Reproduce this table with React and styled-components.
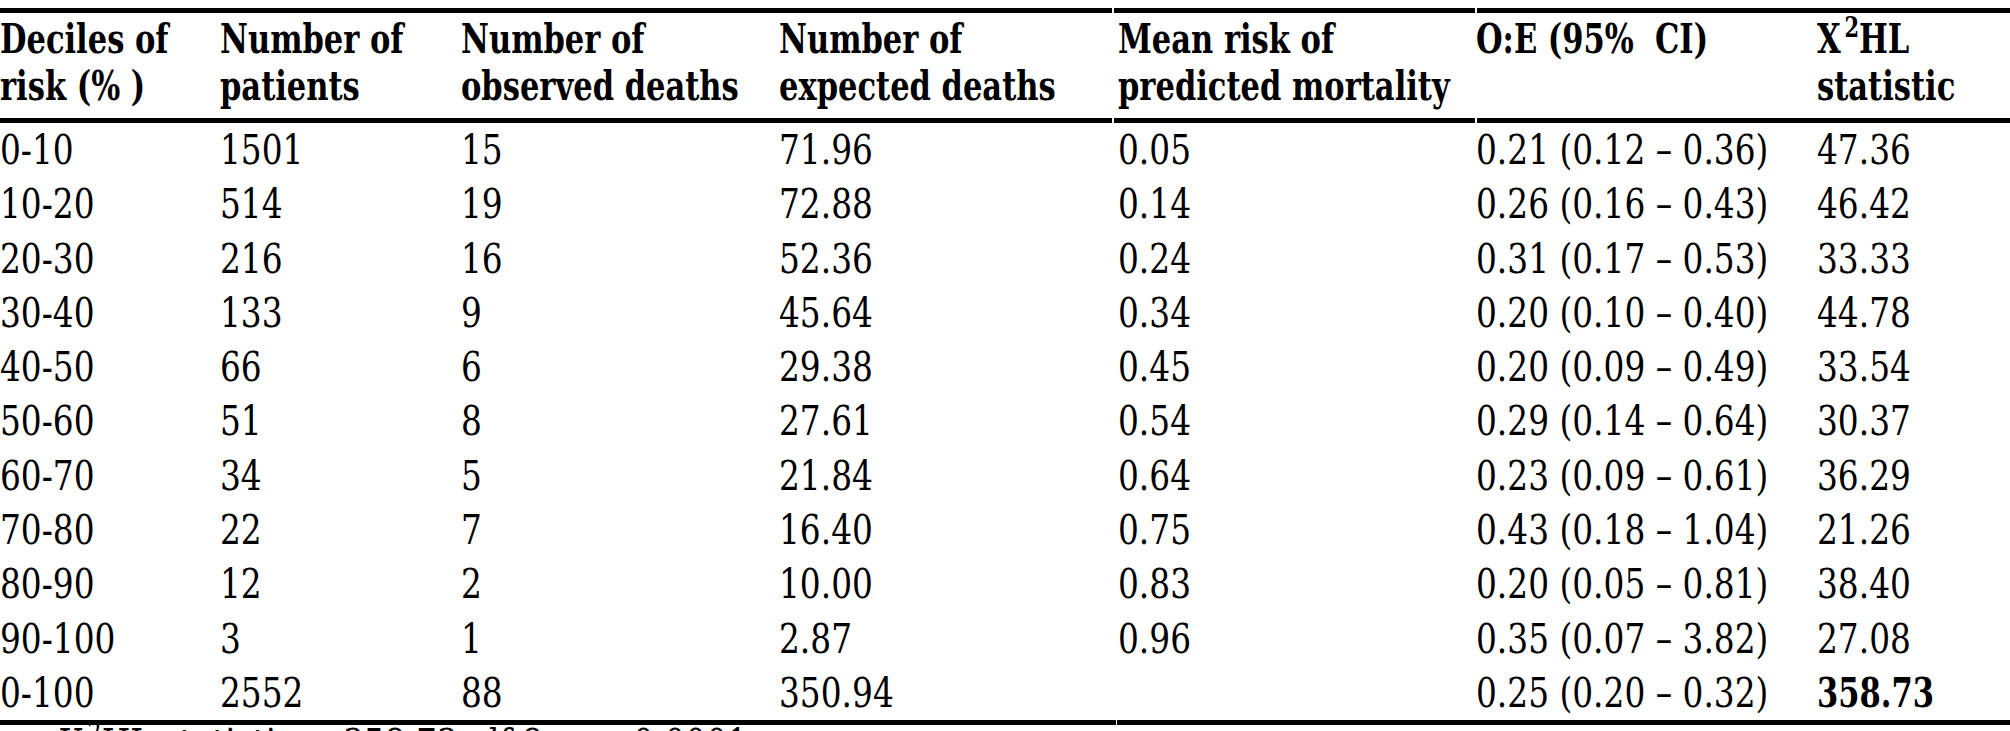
import React from 'react';
import styled, { createGlobalStyle } from 'styled-components';

const GlobalStyle = createGlobalStyle`
  html, body {
    margin: 0;
    padding: 0;
    background: #fff;
  }
  body {
    overflow: hidden;
  }
`;

// column tracks and left padding, measured off the scan
const COLS = '220px 241px 317px 335px 361px 341px 1fr';
const PADS = [0, 0, 0, 1, 5, 2, 2];

const Page = styled.div`
  width: 2010px;
  height: 731px;
  overflow: hidden;
  padding-top: 8px;
  box-sizing: border-box;
  font-family: "DejaVu Serif", "Liberation Serif", serif;
  font-size: 41px;
  color: #000;
`;

const Rule = styled.div`
  display: flex;
  gap: ${props => props.$gap}px;
  height: 5px;
`;

const RuleSeg = styled.div`
  flex: ${props => (props.$width ? `0 0 ${props.$width}px` : '1')};
  background: #000;
`;

const HeaderRow = styled.div`
  display: grid;
  grid-template-columns: ${COLS};
  padding: 3px 0 8px;
  line-height: 47px;
  font-weight: bold;
`;

const DataRow = styled.div`
  display: grid;
  grid-template-columns: ${COLS};
  line-height: 54.3px;
`;

const Cell = styled.div`
  padding-left: ${props => PADS[props.$col]}px;
  display: flex;
  flex-direction: column;
  min-width: 0;
`;

// the scan squeezes the serif face to Times widths, so the glyphs are narrowed
const Txt = styled.span`
  display: block;
  white-space: pre;
  transform: scaleX(${props => (props.$bold ? 0.745 : 0.8)});
  transform-origin: 0 50%;
  font-weight: ${props => (props.$bold ? 'bold' : 'normal')};
`;

const Sup = styled.span`
  font-size: 28px;
  vertical-align: 16px;
  line-height: 0;
  margin-left: 5px;
`;

const Footnote = styled.div`
  padding-left: 60px;
  line-height: 38px;
`;

const headers = [
  ['Deciles of', 'risk (% )'],
  ['Number of', 'patients'],
  ['Number of', 'observed deaths'],
  ['Number of', 'expected deaths'],
  ['Mean risk of', 'predicted mortality'],
  ['O:E (95%\u00a0 CI)', ''],
  [<>X<Sup>2</Sup>HL</>, 'statistic'],
];

const rows = [
  ['0-10', '1501', '15', '71.96', '0.05', '0.21 (0.12 \u2013 0.36)', '47.36'],
  ['10-20', '514', '19', '72.88', '0.14', '0.26 (0.16 \u2013 0.43)', '46.42'],
  ['20-30', '216', '16', '52.36', '0.24', '0.31 (0.17 \u2013 0.53)', '33.33'],
  ['30-40', '133', '9', '45.64', '0.34', '0.20 (0.10 \u2013 0.40)', '44.78'],
  ['40-50', '66', '6', '29.38', '0.45', '0.20 (0.09 \u2013 0.49)', '33.54'],
  ['50-60', '51', '8', '27.61', '0.54', '0.29 (0.14 \u2013 0.64)', '30.37'],
  ['60-70', '34', '5', '21.84', '0.64', '0.23 (0.09 \u2013 0.61)', '36.29'],
  ['70-80', '22', '7', '16.40', '0.75', '0.43 (0.18 \u2013 1.04)', '21.26'],
  ['80-90', '12', '2', '10.00', '0.83', '0.20 (0.05 \u2013 0.81)', '38.40'],
  ['90-100', '3', '1', '2.87', '0.96', '0.35 (0.07 \u2013 3.82)', '27.08'],
  ['0-100', '2552', '88', '350.94', '', '0.25 (0.20 \u2013 0.32)', '358.73'],
];

const App = () => {
  const last = rows.length - 1;
  return (
    <>
      <GlobalStyle />
      <Page>
        <Rule $gap={2}>
          <RuleSeg $width={1112} />
          <RuleSeg $width={361} />
          <RuleSeg />
        </Rule>
        <HeaderRow>
          {headers.map((lines, c) => (
            <Cell key={c} $col={c}>
              <Txt $bold>{lines[0]}</Txt>
              <Txt $bold>{lines[1] || ' '}</Txt>
            </Cell>
          ))}
        </HeaderRow>
        <Rule $gap={2}>
          <RuleSeg $width={1112} />
          <RuleSeg $width={361} />
          <RuleSeg />
        </Rule>
        {rows.map((row, r) => (
          <DataRow key={r}>
            {row.map((val, c) => (
              <Cell key={c} $col={c}>
                <Txt $bold={r === last && c === 6}>{val || ' '}</Txt>
              </Cell>
            ))}
          </DataRow>
        ))}
        <Rule $gap={1}>
          <RuleSeg $width={1116} />
          <RuleSeg />
        </Rule>
        <Footnote>
          <Txt>X<Sup>2</Sup>HL statistic = 358.73, df 8, p &lt; 0.0001</Txt>
        </Footnote>
      </Page>
    </>
  );
};

export default App;
